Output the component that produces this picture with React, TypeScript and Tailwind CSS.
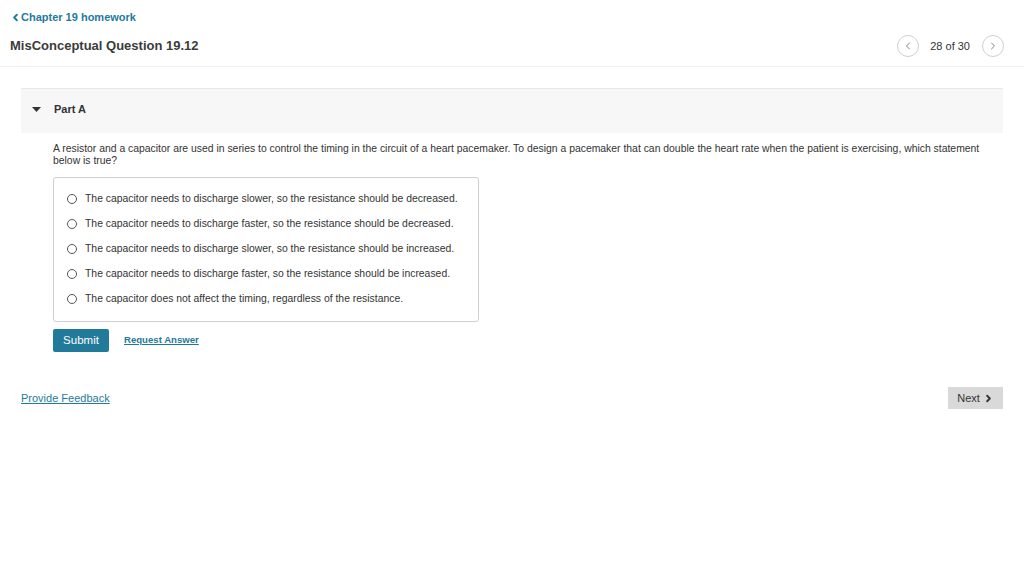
import { ChevronLeft, ChevronRight } from "lucide-react"

const options = [
  "The capacitor needs to discharge slower, so the resistance should be decreased.",
  "The capacitor needs to discharge faster, so the resistance should be decreased.",
  "The capacitor needs to discharge slower, so the resistance should be increased.",
  "The capacitor needs to discharge faster, so the resistance should be increased.",
  "The capacitor does not affect the timing, regardless of the resistance.",
]

export default function App() {
  return (
    <div className="min-h-[576px] w-[1024px] bg-white font-['Liberation_Sans',Arial,sans-serif] text-[#333]">
      {/* header */}
      <div className="border-b border-[#f0f0f0] px-[10px] pb-[9px] pt-[10px]">
        <a className="flex items-center text-[11px] font-bold leading-[14px] text-[#1f7a9c]">
          <ChevronLeft className="size-[11px]" strokeWidth={4} />
          Chapter 19 homework
        </a>
        <div className="mt-[11px] flex items-center justify-between">
          <h1 className="text-[13px] font-bold leading-[16px] text-[#3b3b3b]">MisConceptual Question 19.12</h1>
          <div className="mr-[10px] flex items-center">
            <button className="flex size-[22px] items-center justify-center rounded-full border border-[#cfcfcf] text-[#555]">
              <ChevronLeft className="size-[12px]" strokeWidth={1.5} />
            </button>
            <span className="ml-[11px] mr-[12px] text-[11px] text-[#333]">28 of 30</span>
            <button className="flex size-[22px] items-center justify-center rounded-full border border-[#cfcfcf] text-[#555]">
              <ChevronRight className="size-[12px]" strokeWidth={1.5} />
            </button>
          </div>
        </div>
      </div>

      <div className="px-[21px] pt-[21px]">
        {/* part header */}
        <div className="flex h-[45px] items-center border-t border-[#e8e8e8] bg-[#f7f7f7] pl-[11px]">
          <svg width="9" height="6" viewBox="0 0 9 6" className="mt-[-2px]">
            <polygon points="0,0 9,0 4.5,5" fill="#333" />
          </svg>
          <span className="ml-[13px] mt-[-4px] text-[11px] font-bold text-[#333]">Part A</span>
        </div>

        <div className="pl-[32px] pr-[20px]">
          <p className="mt-[10px] text-[10.4px] leading-[12px] text-[#333]">
            A resistor and a capacitor are used in series to control the timing in the circuit of a heart pacemaker. To design a pacemaker that can double the heart rate when the patient is exercising, which statement below is true?
          </p>

          <div className="mt-[10px] w-[426px] rounded-[3px] border border-[#cfcfcf] pb-[10px] pt-[8px] pl-[13px]">
            {options.map((o) => (
              <label key={o} className="flex h-[25px] items-center">
                <span className="size-[10px] rounded-full border border-[#555]" />
                <span className="ml-[8px] text-[10.4px] text-[#333]">{o}</span>
              </label>
            ))}
          </div>

          <div className="mt-[7px] flex items-center">
            <button className="h-[23px] w-[56px] rounded-[2px] bg-[#227a9b] text-[11.5px] text-white">Submit</button>
            <a className="ml-[15px] text-[9.6px] font-bold text-[#1f7a9c] underline">Request Answer</a>
          </div>
        </div>

        <div className="mt-[35px] flex items-center justify-between">
          <a className="text-[11px] text-[#1f7a9c] underline">Provide Feedback</a>
          <button className="flex h-[22px] w-[55px] items-center justify-center gap-[3px] bg-[#d9d9d9] text-[11px] text-[#333]">
            Next
            <ChevronRight className="size-[11px]" strokeWidth={4} />
          </button>
        </div>
      </div>
    </div>
  )
}
